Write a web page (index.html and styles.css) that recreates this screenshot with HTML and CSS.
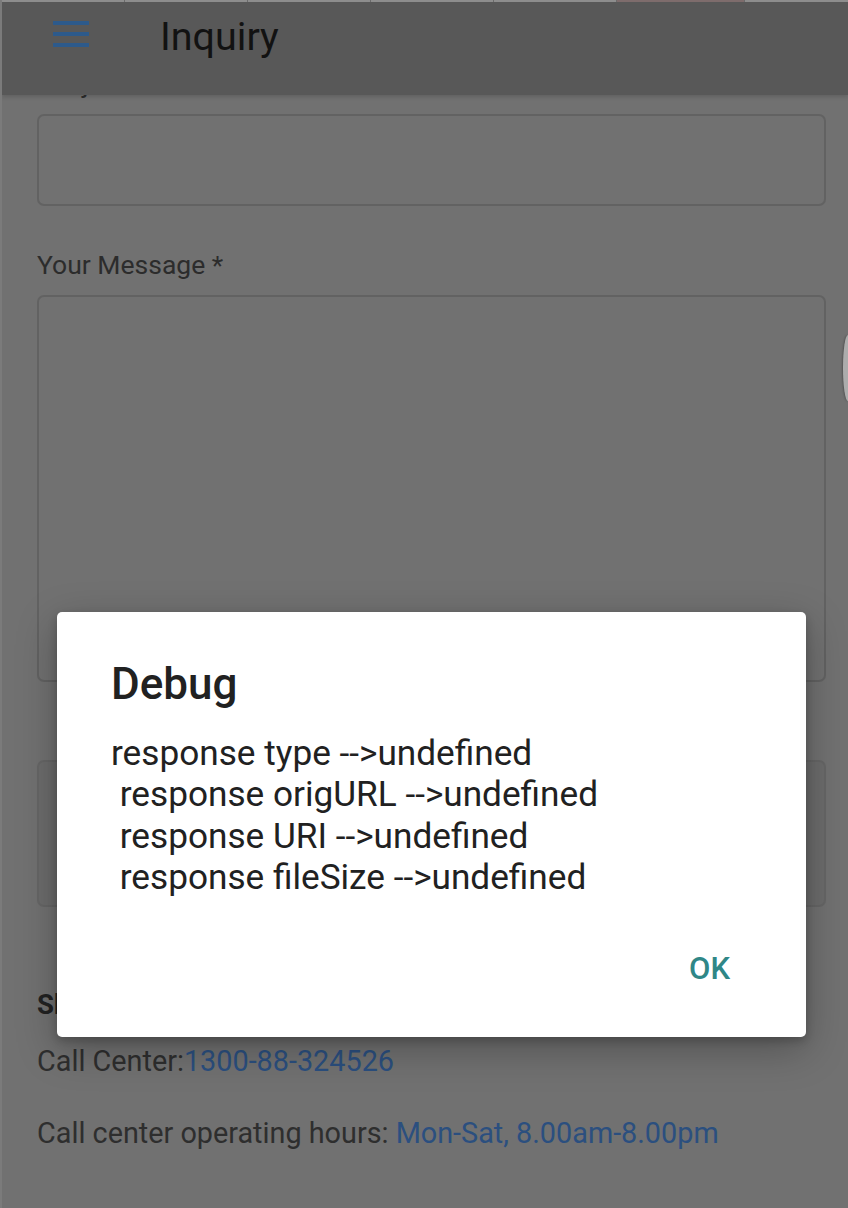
FILE: index.html
```html
<!DOCTYPE html>
<html lang="en">
<head>
<meta charset="utf-8">
<title>Inquiry</title>
<link rel="stylesheet" href="styles.css">
</head>
<body>
<div class="tabs">
  <span class="tab"></span><span class="tab"></span><span class="tab"></span><span class="tab"></span><span class="tab"></span><span class="tab pink"></span><span class="tab rest"></span>
</div>
<header class="appbar">
  <svg class="menu" width="36" height="26" viewBox="0 0 36 26" aria-hidden="true">
    <rect x="0" y="0" width="36" height="4" fill="#2d5a8b"/>
    <rect x="0" y="11" width="36" height="4" fill="#2d5a8b"/>
    <rect x="0" y="22" width="36" height="4" fill="#2d5a8b"/>
  </svg>
  <h1 class="title">Inquiry</h1>
</header>

<main class="page">
  <label class="label">Subject *</label>
  <div class="field field-short"></div>

  <label class="label label-gap">Your Message *</label>
  <div class="field field-tall"></div>

  <div class="field field-box"></div>

  <h2 class="heading">Shop Information</h2>
  <p class="info">Call Center:<span class="link">1300-88-324526</span></p>
  <p class="info info-hours">Call center operating hours: <span class="link">Mon-Sat, 8.00am-8.00pm</span></p>
</main>

<div class="fab"></div>

<div class="dialog" role="dialog">
  <h3 class="dlg-title">Debug</h3>
  <p class="dlg-msg">response type --&gt;undefined<br>&nbsp;response origURL --&gt;undefined<br>&nbsp;response URI --&gt;undefined<br>&nbsp;response fileSize --&gt;undefined</p>
  <div class="dlg-actions"><span class="dlg-btn">OK</span></div>
</div>
</body>
</html>
```
FILE: styles.css
```css
html, body {
  margin: 0;
  padding: 0;
}
body {
  width: 848px;
  height: 1208px;
  overflow: hidden;
  background: #717171;
  font-family: Roboto, "Liberation Sans", sans-serif;
  border-left: 2px solid #7b7b7b;
  box-sizing: border-box;
  position: relative;
}
.tabs {
  position: absolute;
  top: 0;
  left: 0;
  right: 0;
  height: 2px;
  display: flex;
  z-index: 3;
}
.tab {
  width: 122px;
  border-right: 1px solid #6a6a6a;
  background: #8d8d8d;
}
.tab.pink {
  width: 127px;
  background: #7e6c6c;
}
.tab.rest {
  flex: 1;
  border-right: 0;
}
.appbar {
  position: absolute;
  top: 2px;
  left: 0;
  right: 0;
  height: 93px;
  background: #585858;
  display: flex;
  align-items: flex-start;
  padding-left: 51px;
  box-shadow: 0 2px 4px rgba(0,0,0,0.15);
  z-index: 2;
}
.menu {
  margin-top: 19px;
  flex: none;
}
.title {
  margin: 11px 0 0 71px;
  font-size: 39.5px;
  line-height: 48px;
  font-weight: 400;
  color: #121212;
}
.page {
  padding: 66px 22px 0 35px;
  display: flex;
  flex-direction: column;
}
.label {
  display: block;
  font-size: 26.5px;
  line-height: 36px;
  color: #2c2c2c;
  margin-bottom: 12px;
}
.label-gap {
  margin-top: 41px;
}
.field {
  border: 2px solid #626262;
  border-radius: 7px;
  box-sizing: border-box;
}
.field-short {
  height: 92px;
}
.field-tall {
  height: 387px;
}
.field-box {
  height: 147px;
  margin-top: 78px;
  background: #6c6c6c;
  border-color: #666;
}
.heading {
  margin: 80px 0 0;
  font-size: 27.5px;
  line-height: 36px;
  font-weight: 700;
  color: #222;
}
.info {
  margin: 20px 0 0;
  font-size: 28.8px;
  line-height: 36px;
  color: #2e2e2e;
}
.info-hours {
  margin-top: 36px;
}
.link {
  color: #2b4f7f;
}
.fab {
  position: absolute;
  right: 0;
  top: 335px;
  width: 5px;
  height: 66px;
  border-radius: 5px 0 0 5px / 33px 0 0 33px;
  background: #acacac;
  box-shadow: -1px 0 2px rgba(0,0,0,0.25);
}
.dialog {
  position: absolute;
  left: 55px;
  top: 612px;
  width: 749px;
  box-sizing: border-box;
  padding: 46px 76px 50px 54px;
  background: #fff;
  border-radius: 5px;
  box-shadow: 0 12px 40px rgba(0,0,0,0.28), 0 4px 10px rgba(0,0,0,0.2);
  z-index: 4;
}
.dlg-title {
  margin: 0;
  font-size: 44px;
  line-height: 52px;
  font-weight: 500;
  color: #212121;
}
.dlg-msg {
  margin: 23px 0 0;
  font-size: 35.2px;
  line-height: 41.3px;
  color: #212121;
}
.dlg-actions {
  display: flex;
  justify-content: flex-end;
  margin-top: 53px;
}
.dlg-btn {
  font-size: 31px;
  line-height: 36px;
  font-weight: 500;
  color: #2f8787;
}
```
